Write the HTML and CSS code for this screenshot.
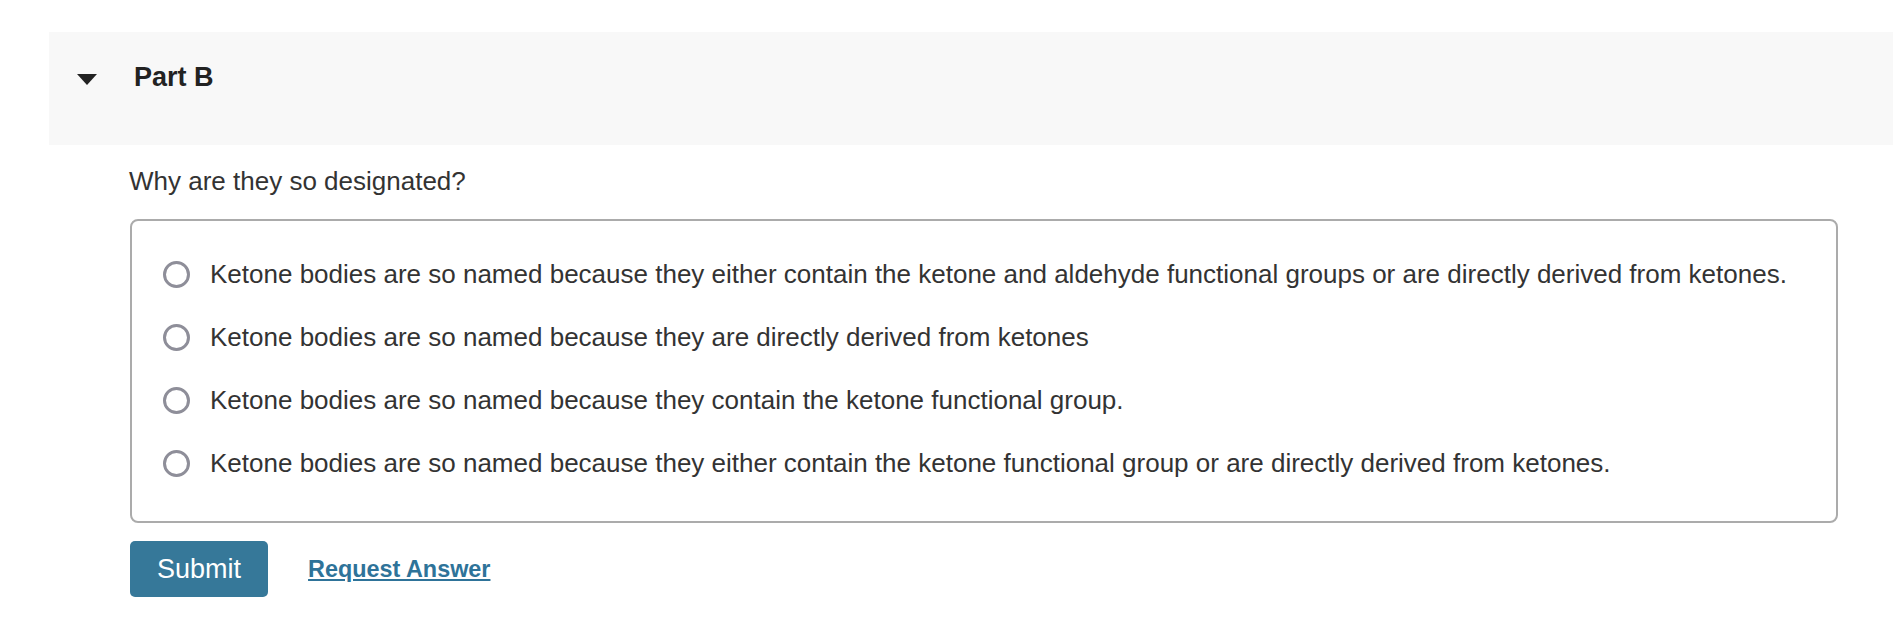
FILE: index.html
```html
<!DOCTYPE html>
<html lang="en">
<head>
    <meta charset="UTF-8">
    <title>Part B</title>
    <link rel="stylesheet" href="styles.css">
</head>
<body>
    <div class="part">
        <div class="part-header">
            <svg class="toggle" width="20" height="11" viewBox="0 0 20 11"><polygon points="0,0 20,0 10,11" fill="#222"/></svg>
            <h2>Part B</h2>
        </div>

        <div class="part-body">
            <p class="question">Why are they so designated?</p>

            <div class="choices">
                <label class="choice">
                    <span class="radio"></span>
                    <span>Ketone bodies are so named because they either contain the ketone and aldehyde functional groups or are directly derived from ketones.</span>
                </label>
                <label class="choice">
                    <span class="radio"></span>
                    <span>Ketone bodies are so named because they are directly derived from ketones</span>
                </label>
                <label class="choice">
                    <span class="radio"></span>
                    <span>Ketone bodies are so named because they contain the ketone functional group.</span>
                </label>
                <label class="choice">
                    <span class="radio"></span>
                    <span>Ketone bodies are so named because they either contain the ketone functional group or are directly derived from ketones.</span>
                </label>
            </div>

            <div class="actions">
                <button type="button" class="btn">Submit</button>
                <a href="#" class="link">Request Answer</a>
            </div>
        </div>
    </div>
</body>
</html>
```

FILE: styles.css
```css
* {
    box-sizing: border-box;
    margin: 0;
    padding: 0;
}

body {
    font-family: 'Liberation Sans', Arial, sans-serif;
    color: #333;
    background-color: #fff;
}

.part {
    padding-top: 32px;
}

.part-header {
    margin-left: 49px;
    height: 113px;
    background-color: #f8f8f8;
    display: flex;
    align-items: flex-start;
    padding-top: 29px;
    padding-left: 28px;
}

.toggle {
    margin-top: 13px;
    flex-shrink: 0;
}

.part-header h2 {
    font-size: 27px;
    line-height: 32px;
    font-weight: 700;
    color: #222;
    margin-left: 37px;
}

.part-body {
    padding-left: 129px;
    padding-right: 55px;
}

.question {
    font-size: 26px;
    line-height: 30px;
    margin-top: 21px;
}

.choices {
    margin-top: 23px;
    margin-left: 1px;
    border: 2px solid #ababab;
    border-radius: 8px;
    padding: 22px 31px 26px;
}

.choice {
    display: flex;
    align-items: center;
    height: 63px;
    font-size: 26px;
    gap: 20px;
}

.radio {
    width: 27px;
    height: 27px;
    border: 3px solid #8e8e99;
    border-radius: 50%;
    flex-shrink: 0;
}

.actions {
    display: flex;
    align-items: center;
    gap: 40px;
    margin-top: 18px;
    margin-left: 1px;
}

.btn {
    background-color: #367899;
    color: #fff;
    border: none;
    border-radius: 5px;
    height: 56px;
    padding: 0 27px;
    font-family: inherit;
    font-size: 27px;
    cursor: pointer;
}

.link {
    color: #2e7399;
    font-weight: 700;
    font-size: 23.4px;
    text-decoration: underline;
}
```
